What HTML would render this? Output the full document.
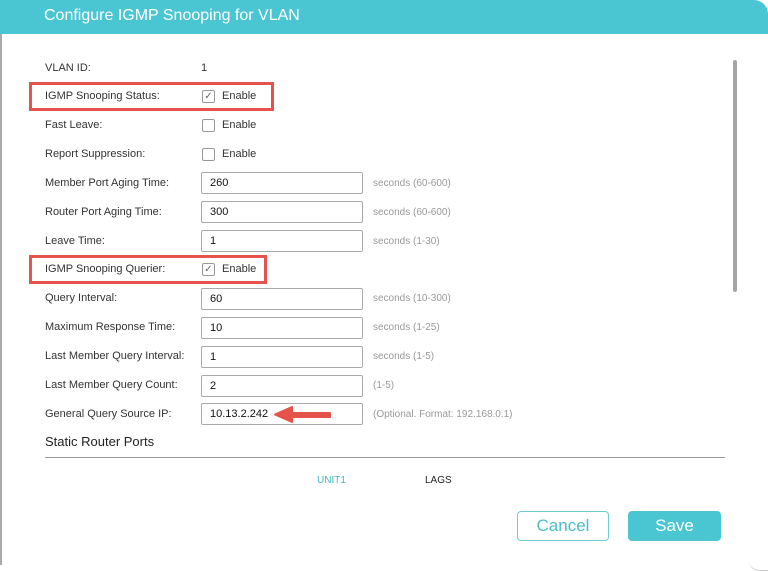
<!DOCTYPE html><html><head><style>
body{margin:0;width:768px;height:565px;overflow:hidden;background:#fff;font-family:"Liberation Sans",sans-serif;position:relative}
.hd{position:absolute;left:0;top:0;width:768px;height:34px;background:#4ac6d2;border-top-right-radius:14px}
.hd span{position:absolute;left:44px;top:7px;color:#fff;font-size:16px}
.lb{position:absolute;left:45px;font-size:11px;color:#333}
.in{position:absolute;left:201px;width:159px;height:20px;border:1px solid #aaa;border-radius:2px;font-size:11px;color:#111;line-height:20px;padding-left:8px;box-sizing:content-box;width:152px}
.ht{position:absolute;left:373px;font-size:10px;color:#999}
.cb{position:absolute;left:202px;width:11px;height:11px;border:1px solid #999;border-radius:2px;font-size:10px;line-height:11px;text-align:center;color:#666}
.en{position:absolute;left:222px;font-size:11px;color:#333}
.rb{position:absolute;border:3px solid #e5534b;box-sizing:border-box}
</style></head><body>
<div style="position:absolute;left:0;top:0;width:2px;height:565px;background:#aaa"></div>
<div class="hd"><span>Configure IGMP Snooping for VLAN</span></div>
<div style="position:absolute;left:733px;top:60px;width:4px;height:232px;background:#a5a5a5;border-radius:2px"></div>

<div class="lb" style="top:62px">VLAN ID:</div><div class="lb" style="top:62px;left:201px">1</div>
<div class="lb" style="top:90px">IGMP Snooping Status:</div><div class="cb" style="top:90px">✓</div><div class="en" style="top:90px">Enable</div>
<div class="lb" style="top:119px">Fast Leave:</div><div class="cb" style="top:119px"></div><div class="en" style="top:119px">Enable</div>
<div class="lb" style="top:148px">Report Suppression:</div><div class="cb" style="top:148px"></div><div class="en" style="top:148px">Enable</div>
<div class="lb" style="top:177px">Member Port Aging Time:</div><div class="in" style="top:172px">260</div><div class="ht" style="top:178px">seconds (60-600)</div>
<div class="lb" style="top:206px">Router Port Aging Time:</div><div class="in" style="top:201px">300</div><div class="ht" style="top:207px">seconds (60-600)</div>
<div class="lb" style="top:235px">Leave Time:</div><div class="in" style="top:230px">1</div><div class="ht" style="top:236px">seconds (1-30)</div>
<div class="lb" style="top:263px">IGMP Snooping Querier:</div><div class="cb" style="top:263px">✓</div><div class="en" style="top:263px">Enable</div>
<div class="lb" style="top:292px">Query Interval:</div><div class="in" style="top:288px">60</div><div class="ht" style="top:293px">seconds (10-300)</div>
<div class="lb" style="top:321px">Maximum Response Time:</div><div class="in" style="top:317px">10</div><div class="ht" style="top:322px">seconds (1-25)</div>
<div class="lb" style="top:350px">Last Member Query Interval:</div><div class="in" style="top:346px">1</div><div class="ht" style="top:351px">seconds (1-5)</div>
<div class="lb" style="top:379px">Last Member Query Count:</div><div class="in" style="top:375px">2</div><div class="ht" style="top:380px">(1-5)</div>
<div class="lb" style="top:408px">General Query Source IP:</div><div class="in" style="top:403px">10.13.2.242</div><div class="ht" style="top:409px">(Optional. Format: 192.168.0.1)</div>
<div class="rb" style="left:29px;top:82px;width:245px;height:29px"></div>
<div class="rb" style="left:29px;top:255px;width:238px;height:29px"></div>
<svg style="position:absolute;left:270px;top:402px" width="66" height="26"><path d="M60 11 L22 11 L22 5 L5 12.5 L22 20 L22 15 L60 15 Z" fill="#e5534b" stroke="#e5534b" stroke-width="2" stroke-linejoin="round"/></svg>
<div style="position:absolute;left:45px;top:434px;font-size:13px;color:#222">Static Router Ports</div>
<div style="position:absolute;left:45px;top:457px;width:680px;height:1px;background:#999"></div>
<div style="position:absolute;left:317px;top:475px;font-size:10px;color:#3fb6c4">UNIT1</div>
<div style="position:absolute;left:425px;top:475px;font-size:10px;color:#222">LAGS</div>
<div style="position:absolute;left:517px;top:511px;width:90px;height:28px;border:1px solid #6ccbd3;border-radius:4px;color:#4cbccb;font-size:17px;text-align:center;line-height:28px">Cancel</div>
<div style="position:absolute;left:628px;top:511px;width:93px;height:30px;background:#4ac6d2;border-radius:4px;color:#fff;font-size:17px;text-align:center;line-height:30px">Save</div>
<div style="position:absolute;left:748px;top:540px;width:30px;height:30px;border:1px solid #ccc;border-radius:12px;border-left:none;border-top:none"></div>
</body></html>
